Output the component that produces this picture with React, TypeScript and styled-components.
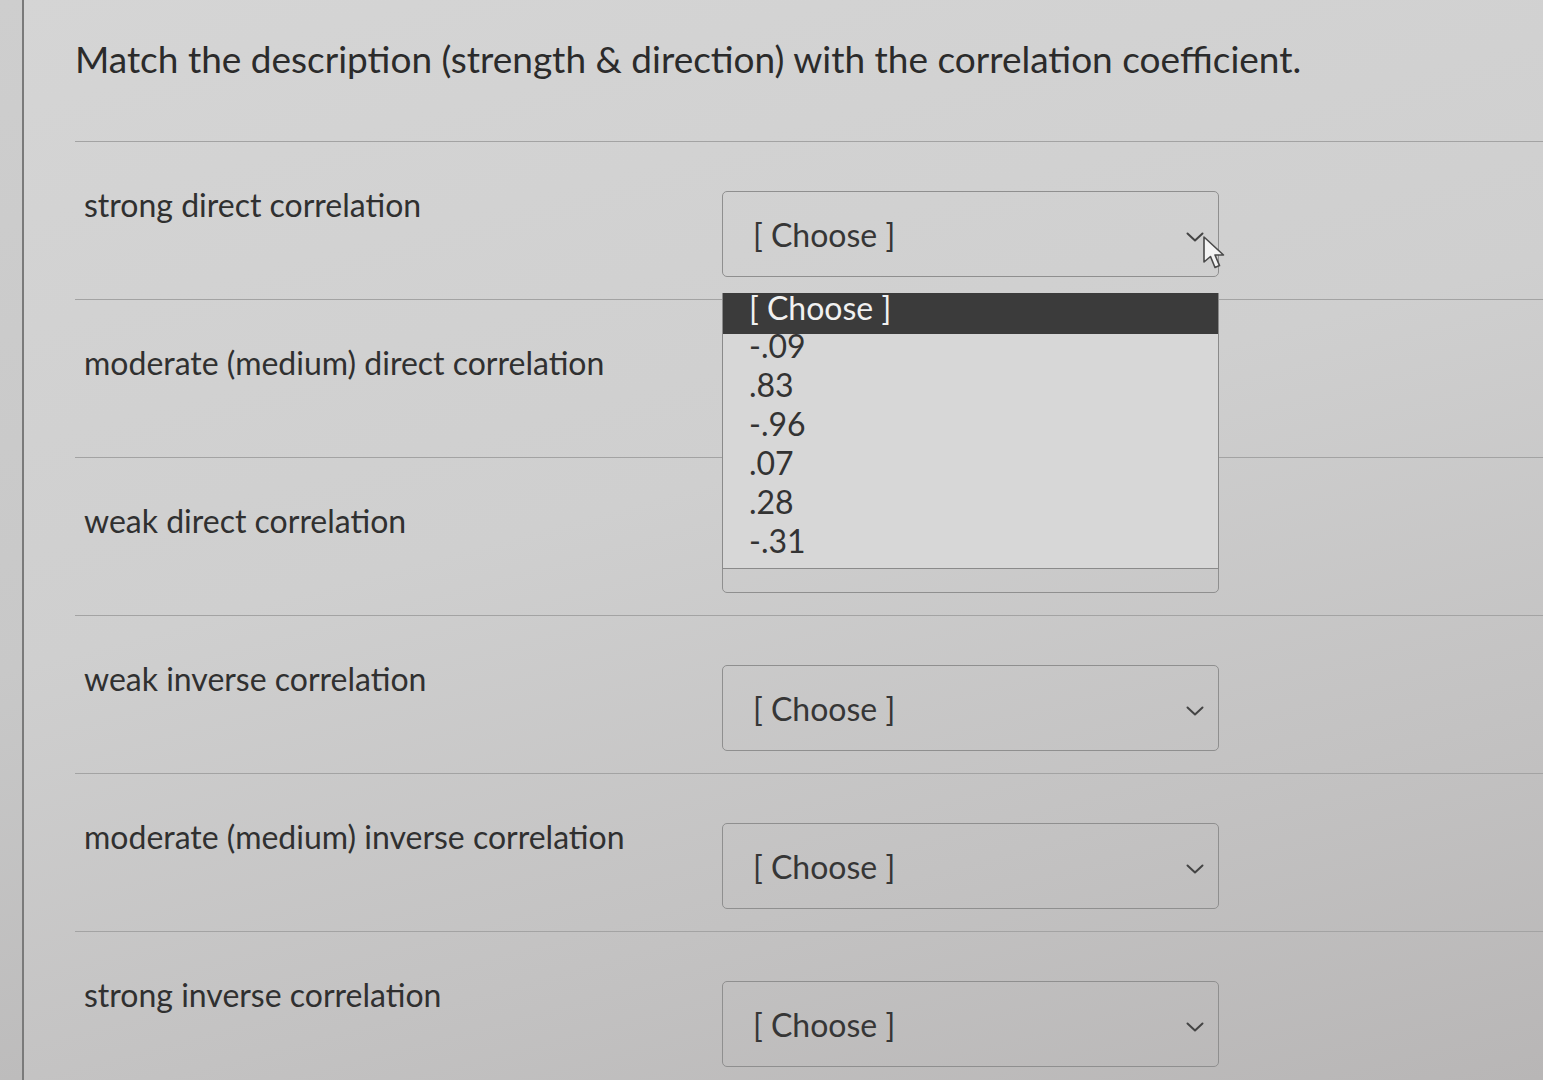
import React from "react";
import styled, { createGlobalStyle } from "styled-components";

const GlobalStyle = createGlobalStyle`
  html, body {
    margin: 0;
    padding: 0;
  }
  body {
    font-family: Lato, "Open Sans", "Liberation Sans", sans-serif;
    color: #333;
    overflow: hidden;
  }
`;

const Page = styled.div`
  display: flex;
  width: 1543px;
  height: 1080px;
  overflow: hidden;
  background: linear-gradient(165deg, #d5d5d5 0%, #cfcfcf 45%, #c3c2c2 75%, #b8b6b6 100%);
`;

const Gutter = styled.div`
  width: 22px;
  flex: none;
  border-right: 2px solid #7a7a7a;
  background: rgba(0, 0, 0, 0.03);
`;

const Main = styled.main`
  flex: 1;
  padding-left: 51px;
  display: flex;
  flex-direction: column;
`;

const Title = styled.h1`
  margin: 37px 0 60px;
  font-size: 37px;
  line-height: 44px;
  font-weight: 400;
  color: #2b2b2b;
  white-space: nowrap;
`;

const Row = styled.div`
  display: grid;
  grid-template-columns: 647px 497px;
  height: 158px;
  box-sizing: border-box;
  border-top: 1px solid #a3a3a3;
  flex: none;
`;

const Label = styled.div`
  padding: 44px 0 0 9px;
  font-size: 32px;
  line-height: 38px;
  color: #303030;
  white-space: nowrap;
`;

const SelectWrap = styled.div`
  position: relative;
  margin-top: 49px;
  height: 86px;
`;

const SelectBox = styled.div`
  box-sizing: border-box;
  height: 100%;
  display: flex;
  align-items: center;
  justify-content: space-between;
  padding: 0 14px 0 30px;
  border: 1px solid #8f8f8f;
  border-radius: 5px;
  font-size: 32px;
  color: #363636;
`;

const Chevron = styled.svg`
  width: 18px;
  height: 10px;
  margin-top: 6px;
  flex: none;
`;

const Menu = styled.ul`
  position: absolute;
  top: calc(100% + 16px);
  left: 0;
  width: 497px;
  margin: 0;
  padding: 0;
  list-style: none;
  box-sizing: border-box;
  background: #d7d7d7;
  border: 1px solid #8a8a8a;
  border-top: none;
  z-index: 2;
`;

/* options sit high in their rows, the way the native list draws them */
const Option = styled.li<{ $active?: boolean }>`
  box-sizing: border-box;
  height: ${(p) => (p.$active ? 41 : 39)}px;
  padding: ${(p) => (p.$active ? "3px" : "0")} 0 0 26px;
  font-size: 32px;
  line-height: 24px;
  background: ${(p) => (p.$active ? "#3b3b3b" : "transparent")};
  color: ${(p) => (p.$active ? "#f1f1f1" : "#333")};
`;

const Pointer = styled.svg`
  position: absolute;
  left: 480px;
  top: 44px;
  width: 26px;
  height: 36px;
  z-index: 3;
`;

const rows = [
  "strong direct correlation",
  "moderate (medium) direct correlation",
  "weak direct correlation",
  "weak inverse correlation",
  "moderate (medium) inverse correlation",
  "strong inverse correlation",
];

const choices = ["-.09", ".83", "-.96", ".07", ".28", "-.31"];

const ChevronIcon = () => (
  <Chevron viewBox="0 0 18 10">
    <path d="M1.5 1.5 L9 8.5 L16.5 1.5" fill="none" stroke="#444" strokeWidth="2" strokeLinecap="round" strokeLinejoin="round" />
  </Chevron>
);

export default function App() {
  return (
    <>
      <GlobalStyle />
      <Page>
        <Gutter />
        <Main>
          <Title>Match the description (strength &amp; direction) with the correlation coefficient.</Title>
          {rows.map((label, i) => (
            <Row key={label}>
              <Label>{label}</Label>
              <SelectWrap>
                <SelectBox>
                  <span>[ Choose ]</span>
                  <ChevronIcon />
                </SelectBox>
                {i === 0 && (
                  <>
                    <Pointer viewBox="0 0 26 36">
                      <path
                        d="M2 2 L2 27 L8.5 21.5 L13 32.5 L17.5 30.6 L13 20 L21.5 20 Z"
                        fill="#f4f4f4"
                        stroke="#4a4a4a"
                        strokeWidth="1.6"
                        strokeLinejoin="round"
                      />
                    </Pointer>
                    <Menu>
                      <Option $active>[ Choose ]</Option>
                      {choices.map((c) => (
                        <Option key={c}>{c}</Option>
                      ))}
                    </Menu>
                  </>
                )}
              </SelectWrap>
            </Row>
          ))}
        </Main>
      </Page>
    </>
  );
}
